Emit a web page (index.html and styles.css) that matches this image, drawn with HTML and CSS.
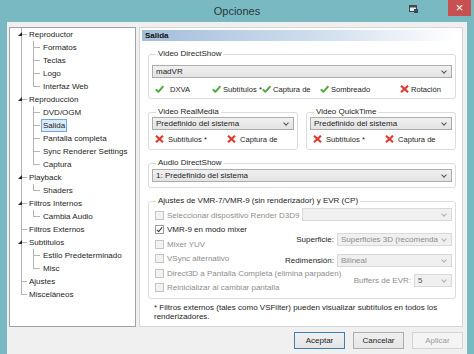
FILE: index.html
```html
<!DOCTYPE html>
<html lang="es">
<head>
    <meta charset="UTF-8">
    <title>Opciones</title>
    <link rel="stylesheet" href="styles.css">
</head>
<body>
<div class="window">
    <div class="titlebar">
        <span class="tb-spacer"></span>
        <span class="title">Opciones</span>
        <svg class="tb-icon" width="9" height="8" viewBox="0 0 9 8">
            <rect x="0.5" y="0.5" width="7" height="6" fill="#e8e8e8" stroke="#3c4a54"/>
            <rect x="0.5" y="0.5" width="7" height="2" fill="#3c4a54"/>
            <rect x="5" y="4" width="4" height="4" fill="#3c4a54"/>
        </svg>
        <span class="tb-quit">&times;</span>
    </div>
    <div class="client">
        <div class="main">
            <div class="tree-box">
                <ul class="tree">
                    <li class="open"><span class="exp"></span><span class="lbl">Reproductor</span>
                        <ul>
                            <li><span class="lbl">Formatos</span></li>
                            <li><span class="lbl">Teclas</span></li>
                            <li><span class="lbl">Logo</span></li>
                            <li><span class="lbl">Interfaz Web</span></li>
                        </ul>
                    </li>
                    <li class="open"><span class="exp"></span><span class="lbl">Reproducción</span>
                        <ul>
                            <li><span class="lbl">DVD/OGM</span></li>
                            <li><span class="lbl selected">Salida</span></li>
                            <li><span class="lbl">Pantalla completa</span></li>
                            <li><span class="lbl">Sync Renderer Settings</span></li>
                            <li><span class="lbl">Captura</span></li>
                        </ul>
                    </li>
                    <li class="open"><span class="exp"></span><span class="lbl">Playback</span>
                        <ul>
                            <li><span class="lbl">Shaders</span></li>
                        </ul>
                    </li>
                    <li class="open"><span class="exp"></span><span class="lbl">Filtros Internos</span>
                        <ul>
                            <li><span class="lbl">Cambia Audio</span></li>
                        </ul>
                    </li>
                    <li><span class="lbl">Filtros Externos</span></li>
                    <li class="open"><span class="exp"></span><span class="lbl">Subtitulos</span>
                        <ul>
                            <li><span class="lbl">Estilo Predeterminado</span></li>
                            <li><span class="lbl">Misc</span></li>
                        </ul>
                    </li>
                    <li><span class="lbl">Ajustes</span></li>
                    <li><span class="lbl">Misceláneos</span></li>
                </ul>
            </div>

            <div class="page">
                <div class="page-head">Salida</div>

                <fieldset class="group g-ds">
                    <legend>Video DirectShow</legend>
                    <div class="combo"><span>madVR</span><i class="chev"></i></div>
                    <div class="caps caps-ds">
                        <span class="cap"><i class="ok"></i>DXVA</span>
                        <span class="cap"><i class="ok"></i>Subtítulos *</span>
                        <span class="cap"><i class="ok"></i>Captura de</span>
                        <span class="cap"><i class="ok"></i>Sombreado</span>
                        <span class="cap"><i class="no"></i>Rotación</span>
                    </div>
                </fieldset>

                <div class="pair">
                    <fieldset class="group g-half">
                        <legend>Video RealMedia</legend>
                        <div class="combo"><span>Predefinido del sistema</span><i class="chev"></i></div>
                        <div class="caps caps-half">
                            <span class="cap"><i class="no"></i>Subtítulos *</span>
                            <span class="cap"><i class="no"></i>Captura de</span>
                        </div>
                    </fieldset>
                    <fieldset class="group g-half">
                        <legend>Video QuickTime</legend>
                        <div class="combo"><span>Predefinido del sistema</span><i class="chev"></i></div>
                        <div class="caps caps-half">
                            <span class="cap"><i class="no"></i>Subtítulos *</span>
                            <span class="cap"><i class="no"></i>Captura de</span>
                        </div>
                    </fieldset>
                </div>

                <fieldset class="group g-audio">
                    <legend>Audio DirectShow</legend>
                    <div class="combo"><span>1: Predefinido del sistema</span><i class="chev"></i></div>
                </fieldset>

                <fieldset class="group g-vmr">
                    <legend>Ajustes de VMR-7/VMR-9 (sin renderizador) y EVR (CP)</legend>
                    <div class="vmr">
                        <div class="checks">
                            <div class="chk off"><i class="box"></i>Seleccionar dispositivo Render D3D9</div>
                            <div class="chk"><i class="box checked"></i>VMR-9 en modo mixer</div>
                            <div class="chk off"><i class="box"></i>Mixer YUV</div>
                            <div class="chk off"><i class="box"></i>VSync alternativo</div>
                            <div class="chk off"><i class="box"></i>Direct3D a Pantalla Completa (elimina parpaden)</div>
                            <div class="chk off"><i class="box"></i>Reinicializar al cambiar pantalla</div>
                        </div>
                        <div class="opts">
                            <div class="combo off c-dev"><span></span><i class="chev"></i></div>
                            <div class="opt o-surf"><label>Superficie:</label><div class="combo off c-mid"><span>Superficies 3D (recomendad</span><i class="chev"></i></div></div>
                            <div class="opt o-resize"><label>Redimensión:</label><div class="combo off c-mid"><span>Bilineal</span><i class="chev"></i></div></div>
                            <div class="opt o-buf"><label class="dim">Buffers de EVR:</label><div class="combo off c-small"><span>5</span><i class="chev"></i></div></div>
                        </div>
                    </div>
                </fieldset>

                <p class="note">* Filtros externos (tales como VSFilter) pueden visualizar subtítulos en todos los renderizadores.</p>
            </div>
        </div>

        <div class="buttons">
            <button class="btn default">Aceptar</button>
            <button class="btn">Cancelar</button>
            <button class="btn" disabled>Aplicar</button>
        </div>
    </div>
</div>
</body>
</html>
```

FILE: styles.css
```css
/* Ventana de opciones */
* {
    box-sizing: border-box;
}
body {
    margin: 0;
    background-color: #79b9c1;
    font-family: "Liberation Sans", Arial, sans-serif;
    font-size: 8px;
    color: #1e1e1e;
}
.window {
    width: 474px;
    height: 354px;
    display: flex;
    flex-direction: column;
    overflow: hidden;
}

/* Barra de titulo */
.titlebar {
    height: 22px;
    display: flex;
    align-items: flex-start;
    flex: none;
    background: linear-gradient(#c75050, #c75050) no-repeat right 3px top 0 / 23px 16px;
}
.tb-spacer {
    width: 69px;
    flex: none;
}
.title {
    flex: 1;
    text-align: center;
    font-size: 11px;
    line-height: 22px;
    color: #2b3a40;
}
.tb-icon {
    display: block;
    flex: none;
    margin: 5px 30px 0 4px;
}
.tb-quit {
    flex: none;
    width: 23px;
    height: 16px;
    margin-right: 3px;
    color: #fff;
    font-size: 13px;
    line-height: 15px;
    text-align: center;
}

/* Area cliente */
.client {
    flex: 1;
    min-width: 0;
    margin: 0 7px;
    background-color: #f0f0f0;
    padding: 5px 4px 0 2px;
    display: flex;
    flex-direction: column;
}
.main {
    display: flex;
    gap: 3px;
    height: 300px;
    flex: none;
}

/* Arbol */
.tree-box {
    width: 127px;
    flex: none;
    background-color: #fff;
    border: 1px solid #9fa3a8;
}
.tree, .tree ul {
    list-style: none;
    margin: 0;
    padding: 0;
}
.tree {
    margin: 0 0 0 11px;
}
.tree ul {
    margin-left: 12px;
}
.tree li {
    position: relative;
    line-height: 13px;
    white-space: nowrap;
}
.tree li::before {
    content: "";
    position: absolute;
    left: 0;
    top: 0;
    bottom: 0;
    border-left: 1px solid #b4b4b4;
}
.tree li:last-child::before {
    bottom: auto;
    height: 7px;
}
.tree li::after {
    content: "";
    position: absolute;
    left: 0;
    top: 6px;
    width: 6px;
    border-top: 1px solid #b4b4b4;
}
.tree ul li::after {
    width: 7px;
}
.tree .lbl {
    display: inline-block;
    margin-left: 6px;
    padding: 0 1px;
    border: 1px solid transparent;
    line-height: 11px;
}
.tree ul .lbl {
    margin-left: 8px;
}
.tree .lbl.selected {
    background-color: #d9ebf9;
    border-color: #6fa8dc;
}
.tree .exp {
    position: absolute;
    left: -3px;
    top: 4px;
    width: 0;
    height: 0;
    border-left: 4px solid transparent;
    border-bottom: 4px solid #262626;
    z-index: 1;
}

/* Pagina derecha */
.page {
    flex: 1;
    min-width: 0;
    overflow: hidden;
    background-color: #fff;
    border: 1px solid #d6d6d6;
    padding: 2px 6px 0 2px;
}
.page-head {
    height: 11px;
    line-height: 11px;
    padding-left: 3px;
    font-weight: bold;
    color: #111;
    background: linear-gradient(to right, #a3bedc, #d3e0ef 60%, #fff);
}
.group {
    margin: 8px 0 0 6px;
    padding: 0 3px 3px;
    border: 1px solid #dcdcdc;
    border-radius: 3px;
    min-width: 0;
}
.group legend {
    margin-left: 4px;
    padding: 0 2px;
    line-height: 10px;
    color: #1e1e1e;
}

/* Combos */
.combo {
    height: 13px;
    border: 1px solid #acacac;
    background: linear-gradient(#f0f0f0, #e3e3e3);
    display: flex;
    align-items: center;
    padding: 0 4px 0 3px;
    min-width: 0;
}
.combo span {
    flex: 1;
    min-width: 0;
    overflow: hidden;
    white-space: nowrap;
}
.chev {
    flex: none;
    width: 4px;
    height: 4px;
    border-right: 1px solid #555;
    border-bottom: 1px solid #555;
    transform: rotate(45deg);
    margin: -2px 1px 0 4px;
}
.combo.off {
    border-color: #d9d9d9;
    background: #f0f0f0;
    color: #8d8d8d;
}
.combo.off .chev {
    border-color: #b0b0b0;
}

.g-ds .combo {
    margin-top: 6px;
}
.g-half .combo {
    margin-top: 0;
}
.g-audio {
    padding-bottom: 5px;
}
.g-audio .combo {
    margin-top: 1px;
}

/* Capacidades */
.caps {
    display: flex;
    height: 12px;
    align-items: center;
    margin-top: 5px;
    padding-left: 3px;
    font-size: 7.6px;
}
.caps-half {
    margin-top: 3px;
}
.cap {
    display: flex;
    align-items: center;
    white-space: nowrap;
    flex: none;
}
.caps-ds .cap:nth-child(1) { width: 57px; }
.caps-ds .cap:nth-child(2) { width: 50px; }
.caps-ds .cap:nth-child(3) { width: 58px; }
.caps-ds .cap:nth-child(4) { width: 80px; }
.caps-half .cap:nth-child(1) { width: 72px; }
.cap i {
    flex: none;
    width: 9px;
    height: 8px;
    margin-right: 2px;
    background-repeat: no-repeat;
}
.caps-ds .cap:first-child i {
    margin-right: 6px;
}
.cap .ok {
    background-image: url("data:image/svg+xml,%3Csvg xmlns='http://www.w3.org/2000/svg' viewBox='0 0 9 8'%3E%3Cpath d='M0.8 4.4 L3.3 6.8 L8.4 1.2' fill='none' stroke='%2353a93f' stroke-width='2' stroke-linejoin='round'/%3E%3C/svg%3E");
}
.cap .no {
    background-image: url("data:image/svg+xml,%3Csvg xmlns='http://www.w3.org/2000/svg' viewBox='0 0 9 8'%3E%3Cpath d='M1 0.8 L8 7.2 M8 0.8 L1 7.2' fill='none' stroke='%23e03a2e' stroke-width='2.2'/%3E%3C/svg%3E");
}
.caps-half .cap i {
    margin-right: 4px;
}

.pair {
    display: flex;
    gap: 8px;
    margin-left: 6px;
}
.pair .group {
    margin-left: 0;
    flex: 1;
    padding-bottom: 4px;
}

/* VMR */
.vmr {
    display: flex;
    padding: 2px 0 0 3px;
}
.checks {
    flex: 1;
    min-width: 0;
}
.chk {
    height: 14.5px;
    display: flex;
    align-items: center;
    white-space: nowrap;
}
.chk.off {
    color: #8d8d8d;
}
.box {
    width: 9px;
    height: 9px;
    border: 1px solid #c4c4c4;
    background-color: #f2f2f2;
    margin-right: 3px;
    flex: none;
    position: relative;
}
.box.checked {
    border-color: #9a9a9a;
    background-color: #fff;
}
.box.checked::after {
    content: "";
    position: absolute;
    left: 2px;
    top: 0;
    width: 2px;
    height: 5px;
    border-right: 1px solid #333;
    border-bottom: 1px solid #333;
    transform: rotate(40deg);
}
.opts {
    width: 150px;
    flex: none;
    display: flex;
    flex-direction: column;
    align-items: flex-end;
}
.c-dev {
    width: 150px;
}
.opt {
    display: flex;
    align-items: center;
    gap: 3px;
    white-space: nowrap;
}
.opt label.dim {
    color: #8d8d8d;
}
.o-surf {
    margin-top: 12px;
}
.o-resize {
    margin-top: 8px;
}
.o-buf {
    margin-top: 7px;
}
.c-mid {
    width: 115px;
}
.c-small {
    width: 38px;
}
.c-small span {
    color: #555;
}

.note {
    margin: 4px 0 0 12px;
    line-height: 9px;
}

/* Botones */
.buttons {
    display: flex;
    justify-content: flex-end;
    gap: 8px;
    padding-top: 5px;
}
.btn {
    width: 51px;
    height: 17px;
    font: inherit;
    color: #1e1e1e;
    border: 1px solid #acacac;
    background: linear-gradient(#f0f0f0, #e5e5e5);
    padding: 0;
}
.btn.default {
    border-color: #3c7fb1;
}
.btn:disabled {
    color: #9a9a9a;
    border-color: #d5d5d5;
    background: #f4f4f4;
}
```
